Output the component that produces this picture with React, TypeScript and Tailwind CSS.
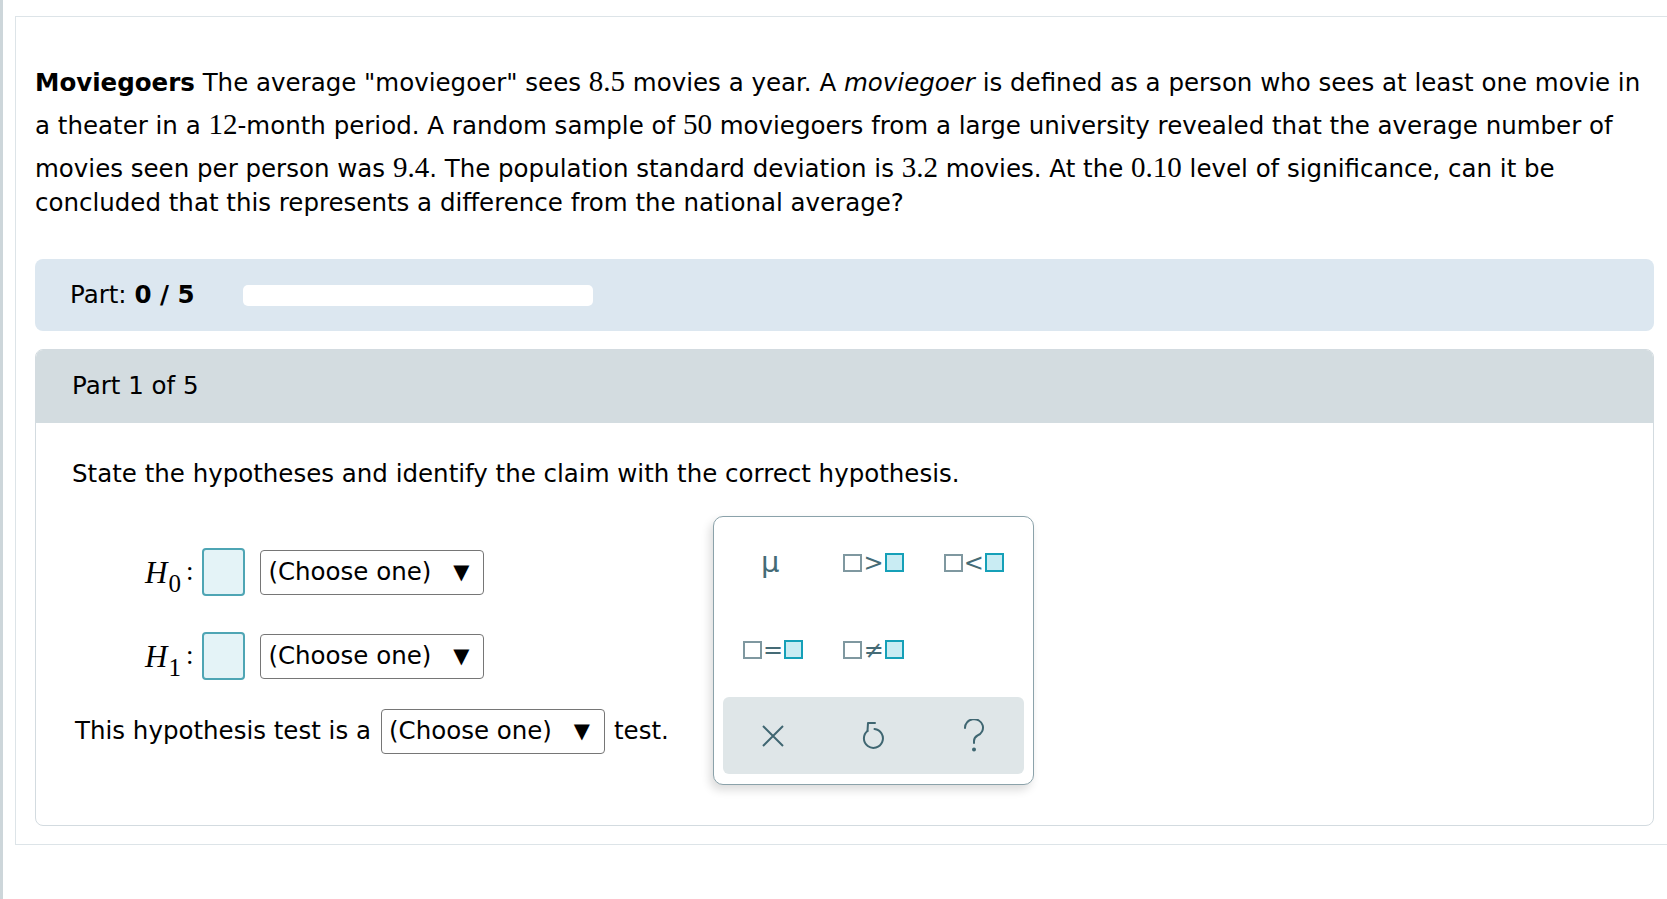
import type { ReactNode } from 'react';

// inline math number, set in a serif face like the original renderer
const M = ({ children }: { children: ReactNode }) => (
  <span className="inline-block pt-[7px] font-['Liberation_Serif',serif] text-[29px] leading-[34px]">{children}</span>
);

const ChooseOne = () => (
  <div className="inline-flex items-center justify-between w-[224px] h-[45px] border border-[#767676] rounded-[4px] bg-white pl-[7px] pr-[14px] text-[24.5px] text-black shrink-0">
    <span>(Choose one)</span>
    <span className="text-[21px] leading-none">▼</span>
  </div>
);

const AnswerBox = () => (
  <div className="w-[43px] h-[48px] rounded-[4px] border-2 border-[#4ea5b4] bg-[#e4f3f7] shrink-0" />
);

const Hyp = ({ sub }: { sub: string }) => (
  <div className="flex items-center h-[48px] pl-[73px]">
    <span className="font-['Liberation_Serif',serif] italic text-[31px] leading-none">H</span>
    <span className="font-['Liberation_Serif',serif] text-[25px] leading-none ml-[1px] translate-y-[11px]">
      {sub}
    </span>
    <span className="font-['Liberation_Serif',serif] text-[27px] leading-none ml-[5px] -translate-y-[1px]">:</span>
    <div className="ml-[9px]">
      <AnswerBox />
    </div>
    <div className="ml-[15px]">
      <ChooseOne />
    </div>
  </div>
);

const GraySq = () => <span className="inline-block w-[19px] h-[18px] border-2 border-[#7f98a0] bg-white" />;
const TealSq = () => <span className="inline-block w-[19px] h-[19px] border-2 border-[#15a0b8] bg-[#c9ecf3]" />;

const Relation = ({ op }: { op: string }) => (
  <div className="flex items-center">
    <GraySq />
    <span className="mx-[1px] text-[24px] leading-none text-[#456b76] font-['DejaVu_Sans',sans-serif]">{op}</span>
    <TealSq />
  </div>
);

const Cell = ({ children }: { children?: ReactNode }) => (
  <div className="h-[87px] flex items-center justify-center">{children}</div>
);

function Keypad() {
  return (
    <div className="w-[321px] shrink-0 rounded-[10px] border border-[#8ba2aa] bg-white shadow-[-3px_5px_10px_rgba(0,0,0,0.14)] px-[9px] pt-[2px] pb-[10px]">
      <div className="grid grid-cols-3">
        <Cell>
          <span className="text-[29px] leading-none text-[#456b76] -ml-[6px]">μ</span>
        </Cell>
        <Cell>
          <Relation op=">" />
        </Cell>
        <Cell>
          <Relation op="<" />
        </Cell>
        <Cell>
          <Relation op="=" />
        </Cell>
        <Cell>
          <Relation op="≠" />
        </Cell>
        <Cell />
      </div>
      <div className="mt-[4px] h-[77px] rounded-[6px] bg-[#dfe6e8] grid grid-cols-3 items-center">
        <div className="flex justify-center">
          <svg width="22" height="22" viewBox="0 0 22 22" fill="none" stroke="#3f6671" strokeWidth="2">
            <path d="M1 1 L21 21 M21 1 L1 21" />
          </svg>
        </div>
        <div className="flex justify-center">
          <svg width="24" height="29" viewBox="0 0 24 29" fill="none" stroke="#3f6671" strokeWidth="2" strokeLinecap="round" strokeLinejoin="round">
            <path d="M7 2 L14 2 M7 2 L6.5 10" />
            <path d="M6.5 10 A9.5 9.5 0 1 0 13.5 8" />
          </svg>
        </div>
        <div className="flex justify-center">
          <svg width="22" height="33" viewBox="0 0 22 33" fill="none" stroke="#3f6671" strokeWidth="2" strokeLinecap="round">
            <path d="M2 9 A9 8.5 0 1 1 14.5 16.5 C12 17.8 11 19.5 11 22 L11 24" />
            <circle cx="11" cy="30.5" r="1" fill="#3f6671" />
          </svg>
        </div>
      </div>
    </div>
  );
}

export default function App() {
  return (
    <div className="min-h-screen bg-white flex font-['DejaVu_Sans',Verdana,sans-serif] text-black">
      <div className="w-[3px] shrink-0 bg-[#cdd6da]" />
      <div className="flex-1 min-w-0 pl-[12px] pt-[16px]">
        <div className="border border-r-0 border-[#dde4e8] pl-[19px] pr-[13px] pt-[40px] pb-[18px]">
          {/* Problem statement */}
          <p className="text-[24.5px] leading-[34px] whitespace-nowrap">
            <b>Moviegoers</b> The average "moviegoer" sees <M>8.5</M> movies a year. A <i>moviegoer</i> is
            defined as a person who sees at least one movie in
            <br />
            a theater in a <M>12</M>-month period. A random sample of <M>50</M> moviegoers from a large
            university revealed that the average number of
            <br />
            movies seen per person was <M>9.4</M>. The population standard deviation is <M>3.2</M> movies. At
            the <M>0.10</M> level of significance, can it be
            <br />
            concluded that this represents a difference from the national average?
          </p>

          {/* Progress */}
          <div className="mt-[39px] h-[72px] rounded-lg bg-[#dce7f0] flex items-center pl-[35px]">
            <span className="text-[24.5px]">
              Part: <b>0 / 5</b>
            </span>
            <div className="ml-[48px] w-[350px] h-[21px] rounded-[5px] bg-white" />
          </div>

          {/* Part 1 */}
          <div className="mt-[18px] border border-[#d3dbe0] rounded-lg overflow-hidden bg-white">
            <div className="h-[73px] bg-[#d3dce0] flex items-center pl-[36px] text-[24.5px]">Part 1 of 5</div>
            <div className="pl-[36px] pt-[33px] pb-[40px]">
              <p className="text-[24.5px] leading-[35px]">
                State the hypotheses and identify the claim with the correct hypothesis.
              </p>
              <div className="flex items-start mt-[25px]">
                <div className="w-[641px] shrink-0 pt-[32px] flex flex-col">
                  <Hyp sub="0" />
                  <div className="mt-[36px]">
                    <Hyp sub="1" />
                  </div>
                  <div className="mt-[29px] flex items-center h-[45px] pl-[3px] text-[24.5px]">
                    <span>This hypothesis test is a</span>
                    <div className="ml-[10px]">
                      <ChooseOne />
                    </div>
                    <span className="ml-[9px]">test.</span>
                  </div>
                </div>
                <Keypad />
              </div>
            </div>
          </div>
        </div>
      </div>
    </div>
  );
}
